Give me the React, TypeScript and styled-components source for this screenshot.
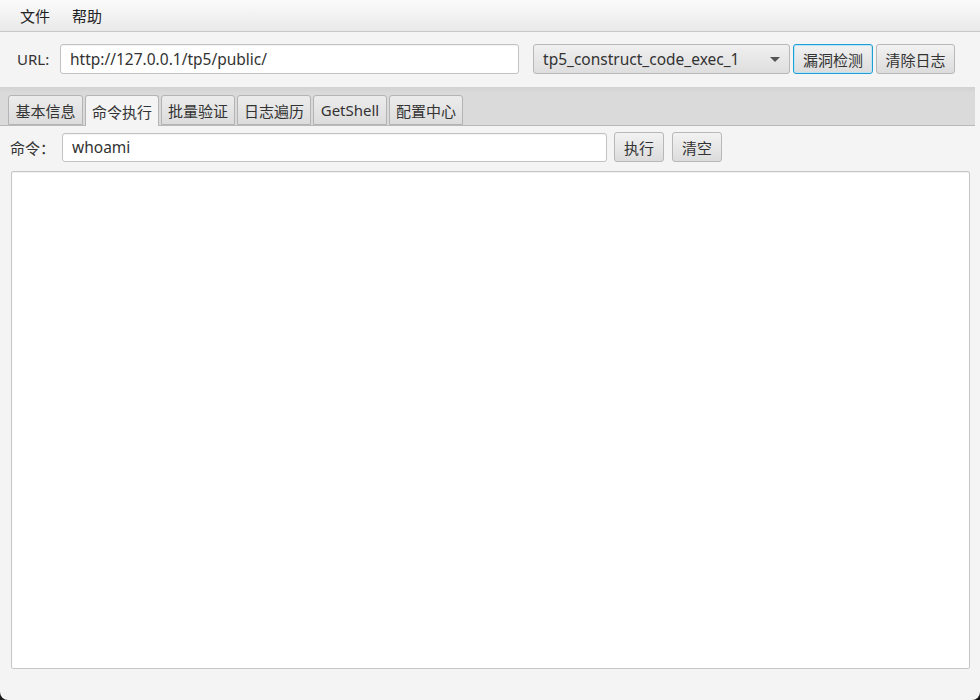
import styled, { createGlobalStyle } from "styled-components";

const GlobalStyle = createGlobalStyle`
  html, body {
    margin: 0;
    padding: 0;
    background: #1a1a1a;
  }
  * { box-sizing: border-box; }
`;

const FONT = `"Segoe UI", "Noto Sans", "Noto Sans CJK SC", sans-serif`;

const Window = styled.div`
  width: 980px;
  height: 700px;
  background: #f4f4f4;
  border-radius: 0 0 8px 8px;
  overflow: hidden;
  display: flex;
  flex-direction: column;
  font-family: ${FONT};
  font-size: 15px;
  color: #333;
`;

const MenuBar = styled.div`
  height: 32px;
  display: flex;
  align-items: center;
  padding-left: 9px;
  background: linear-gradient(#fbfbfb, #e9e9e9);
  border-bottom: 1px solid #c8c8c8;
`;

const MenuItem = styled.div`
  padding: 0 11px;
  font-size: 15px;
  color: #222;
`;

const UrlRow = styled.div`
  display: flex;
  align-items: center;
  height: 54px;
  padding: 0 25px 0 17px;
`;

const Label = styled.span<{ $w: number }>`
  width: ${(p) => p.$w}px;
  flex-shrink: 0;
  font-size: 15px;
  color: #333;
`;

const Field = styled.div<{ $w: number; $h: number }>`
  width: ${(p) => p.$w}px;
  height: ${(p) => p.$h}px;
  background: #fff;
  border: 1px solid #c2c2c2;
  border-radius: 3px;
  display: flex;
  align-items: center;
  padding-left: 9px;
  font-size: 15.5px;
  color: #333;
  box-shadow: inset 0 1px 1px rgba(0, 0, 0, 0.05);
`;

const Combo = styled.div`
  margin-left: 14px;
  width: 258px;
  height: 30px;
  border: 1px solid #b8b8b8;
  border-radius: 3px;
  background: linear-gradient(#f0f0f0, #dedede);
  display: flex;
  align-items: center;
  justify-content: space-between;
  padding: 0 9px 0 9px;
  font-size: 15.5px;
  color: #333;
`;

const Arrow = styled.span`
  width: 0;
  height: 0;
  border-left: 5px solid transparent;
  border-right: 5px solid transparent;
  border-top: 5px solid #555;
`;

const Button = styled.div<{ $w: number; $focus?: boolean; $ml?: number }>`
  width: ${(p) => p.$w}px;
  height: 30px;
  margin-left: ${(p) => p.$ml ?? 3}px;
  flex-shrink: 0;
  display: flex;
  align-items: center;
  justify-content: center;
  border-radius: 3px;
  border: 1px solid ${(p) => (p.$focus ? "#1d9fd6" : "#b8b8b8")};
  box-shadow: ${(p) => (p.$focus ? "inset 0 0 0 1px #bfe3f3" : "none")};
  background: linear-gradient(#f2f2f2, #dcdcdc);
  font-size: 15px;
  color: #333;
`;

const TabHeader = styled.div`
  margin-top: 1px;
  width: 975px;
  height: 39px;
  background: linear-gradient(#d2d2d2, #dadada 6px, #dadada);
  border-bottom: 1px solid #b9b9b9;
  display: flex;
  align-items: flex-end;
  padding-left: 8px;
  gap: 2px;
`;

const Tab = styled.div<{ $active?: boolean; $w: number }>`
  width: ${(p) => p.$w}px;
  height: ${(p) => (p.$active ? 31 : 30)}px;
  margin-bottom: ${(p) => (p.$active ? -1 : 0)}px;
  display: flex;
  align-items: center;
  justify-content: center;
  border: 1px solid #b4b4b4;
  border-bottom: ${(p) => (p.$active ? "none" : "1px solid #b4b4b4")};
  border-radius: 3px 3px 0 0;
  background: ${(p) =>
    p.$active ? "#f4f4f4" : "linear-gradient(#ececec, #dcdcdc)"};
  font-size: 15px;
  color: #333;
`;

const Content = styled.div`
  flex: 1;
  display: flex;
  flex-direction: column;
  padding: 6px 11px 31px 11px;
`;

const CmdRow = styled.div`
  display: flex;
  align-items: center;
  height: 30px;
  margin-left: -1px;
`;

const Output = styled.div`
  margin-top: 9px;
  width: 959px;
  flex: 1;
  background: #fff;
  border: 1px solid #c6c6c6;
  border-radius: 2px;
  box-shadow: inset 0 1px 1px rgba(0, 0, 0, 0.06);
`;

export default function App() {
  return (
    <>
      <GlobalStyle />
      <Window>
        <MenuBar>
          <MenuItem>文件</MenuItem>
          <MenuItem>帮助</MenuItem>
        </MenuBar>
        <UrlRow>
          <Label $w={43}>URL:</Label>
          <Field $w={461} $h={30}>http://127.0.0.1/tp5/public/</Field>
          <Combo>
            tp5_construct_code_exec_1
            <Arrow />
          </Combo>
          <Button $w={80} $focus>漏洞检测</Button>
          <Button $w={79}>清除日志</Button>
        </UrlRow>
        <TabHeader>
          <Tab $w={75}>基本信息</Tab>
          <Tab $w={74} $active>命令执行</Tab>
          <Tab $w={74}>批量验证</Tab>
          <Tab $w={74}>日志遍历</Tab>
          <Tab $w={74}>GetShell</Tab>
          <Tab $w={74}>配置中心</Tab>
        </TabHeader>
        <Content>
          <CmdRow>
            <Label $w={52}>命令：</Label>
            <Field $w={545} $h={29}>whoami</Field>
            <Button $w={50} $ml={7}>执行</Button>
            <Button $w={50} $ml={8}>清空</Button>
          </CmdRow>
          <Output />
        </Content>
      </Window>
    </>
  );
}
